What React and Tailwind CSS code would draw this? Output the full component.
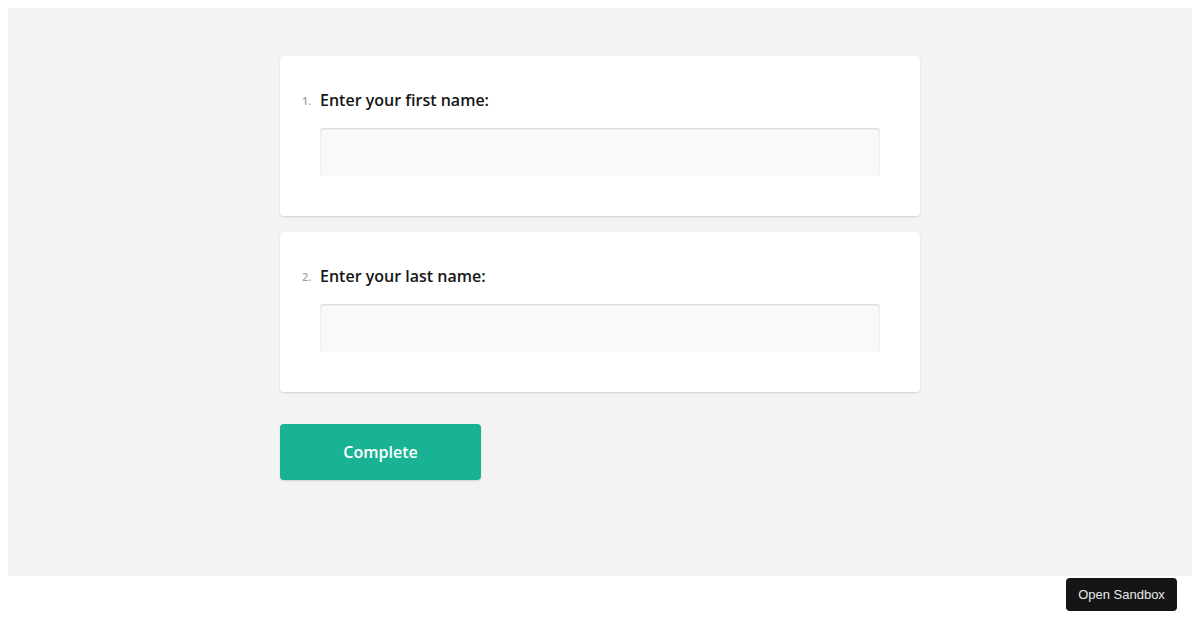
export default function App() {
  const questions = [
    { n: 1, title: 'Enter your first name:' },
    { n: 2, title: 'Enter your last name:' },
  ]

  return (
    <div className="relative h-[630px] bg-white font-['Open_Sans',sans-serif]">
      <div className="absolute left-2 right-2 top-2 h-[568px] bg-[#f3f3f3]">
        <div className="mx-auto w-[640px] pt-12 flex flex-col gap-4">
          {questions.map((q) => (
            <div
              key={q.n}
              className="h-[160px] rounded bg-white pl-[22px] pr-10 pt-8 shadow-[0_1px_2px_rgba(0,0,0,0.15)]"
            >
              <div className="flex">
                <span className="w-[18px] pt-[5px] text-[11px] font-semibold leading-4 text-[#a0a6a4]">{q.n}.</span>
                <div className="flex-1">
                  <h5 className="text-base font-semibold leading-6 text-[#161616]">{q.title}</h5>
                  <input
                    type="text"
                    className="mt-4 block h-12 w-full rounded-[3px] bg-[#f9f9f9] px-4 text-base shadow-[inset_0_1px_2px_rgba(0,0,0,0.15)] outline-none"
                  />
                </div>
              </div>
            </div>
          ))}
          <div className="pt-4">
            <button className="h-14 w-[201px] rounded bg-[#19b394] text-base font-semibold text-white shadow-[0_1px_2px_rgba(0,0,0,0.15)]">
              Complete
            </button>
          </div>
        </div>
      </div>
      <button className="absolute left-[1066px] top-[578px] h-[33px] w-[111px] rounded bg-[#151515] font-['Liberation_Sans',sans-serif] text-[13px] text-[#e8e8e8]">
        Open Sandbox
      </button>
    </div>
  )
}
